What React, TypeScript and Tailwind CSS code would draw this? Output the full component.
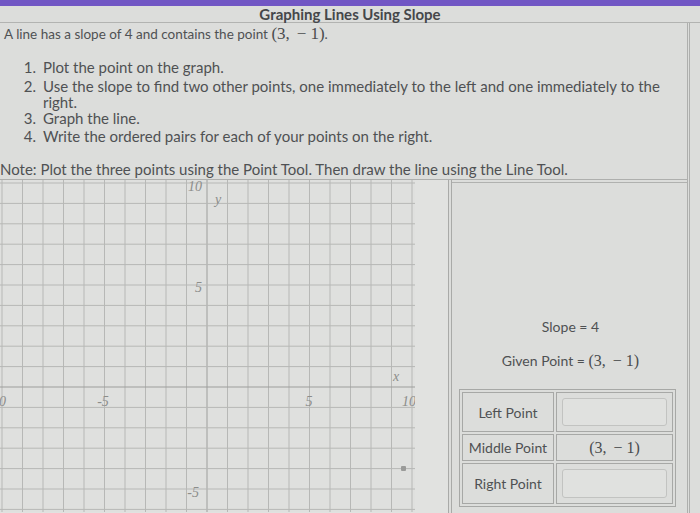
import React from "react";

const M = ({ size = "16px" }: { size?: string }) => (
  <span
    className={
      "font-['Liberation_Serif',serif] text-[#4a4c4e] " + (size === "17px" ? "text-[17px]" : "text-[16px]")
    }
  >
    (3,<span className="ml-[7px] mr-[4px]">−</span>1)
  </span>
);

function Graph() {
  const xs: number[] = [];
  for (let k = -10; k <= 10; k++) xs.push(207 + 20.5 * k);
  const ys: number[] = [];
  for (let k = 10; k >= -6; k--) ys.push(207 - 20.4 * k);
  const lbl = "font-['Liberation_Serif',serif]";
  return (
    <svg width="415" height="332" className="block">
      <rect x="0" y="0" width="415" height="332" fill="#dfe0de" />
      {xs.map((x, i) => (
        <line key={"v" + i} x1={x} y1={0} x2={x} y2={332} stroke={i === 10 ? "#9d9e9c" : "#b7b8b6"} strokeWidth="1" />
      ))}
      {ys.map((y, i) => (
        <line key={"h" + i} x1={0} y1={y} x2={415} y2={y} stroke={i === 10 ? "#9d9e9c" : "#b7b8b6"} strokeWidth="1" />
      ))}
      <g className={lbl} fill="#8c8d8b" fontStyle="italic" fontSize="14">
        <text x="202" y="11" textAnchor="end">10</text>
        <text x="215" y="24">y</text>
        <text x="202" y="112" textAnchor="end">5</text>
        <text x="199" y="317" textAnchor="end">-5</text>
        <text x="393" y="201">x</text>
        <text x="6" y="226" textAnchor="end">-10</text>
        <text x="103" y="226" textAnchor="middle">-5</text>
        <text x="309" y="226" textAnchor="middle">5</text>
        <text x="402" y="226">10</text>
      </g>
      <rect x="401" y="286" width="5" height="5" rx="1" fill="#9a9b99" />
    </svg>
  );
}

export default function App() {
  return (
    <div className="w-[700px] h-[513px] overflow-hidden bg-[#dcdddb] text-[#4f5153] font-['Lato',sans-serif] text-[14px] flex flex-col">
      <div className="h-[6px] shrink-0 bg-[#7156c4]" />
      <div className="h-[17px] shrink-0 border-b border-[#b2b3b1] text-center font-bold leading-[17px] text-[15px] text-[#45474a]">
        Graphing Lines Using Slope
      </div>
      <div className="flex-1 flex flex-col w-[690px] border-r-[3px] border-double border-[#aeafad] min-h-0">
        <div className="pl-[4px] pt-[1px] leading-[20px] text-[13.5px]">
          A line has a slope of 4 and contains the point <M size="17px" />.
        </div>
        <ol className="mt-[14px] text-[15px]">
          <li className="flex leading-[18px]">
            <span className="w-[36px] text-right shrink-0">1.</span>
            <span className="ml-[7px]">Plot the point on the graph.</span>
          </li>
          <li className="flex leading-[16px] mt-[2px]">
            <span className="w-[36px] text-right shrink-0">2.</span>
            <span className="ml-[7px] w-[625px]">
              Use the slope to find two other points, one immediately to the left and one immediately to the right.
            </span>
          </li>
          <li className="flex leading-[17px]">
            <span className="w-[36px] text-right shrink-0">3.</span>
            <span className="ml-[7px]">Graph the line.</span>
          </li>
          <li className="flex leading-[18px]">
            <span className="w-[36px] text-right shrink-0">4.</span>
            <span className="ml-[7px]">Write the ordered pairs for each of your points on the right.</span>
          </li>
        </ol>
        <div className="mt-[15px] leading-[18px] text-[15px]">
          Note: Plot the three points using the Point Tool. Then draw the line using the Line Tool.
        </div>
        <div className="mt-[1px] flex-1 flex border-t border-[#aeafad] min-h-0">
          <div className="w-[448px] shrink-0 bg-[#e1e2e0] overflow-hidden">
            <Graph />
          </div>
          <div className="flex-1 border-l-[4px] border-double border-[#a9aaa8] pt-[2px]">
            <div className="h-full border-t border-[#b0b1af] flex flex-col">
              <div className="mt-[134px] text-center leading-[20px] pl-[2px]">Slope = 4</div>
              <div className="mt-[14px] text-center leading-[20px] pl-[2px]">
                Given Point = <M />
              </div>
              <div className="mt-[18px] ml-[7px] w-[217px] border border-[#a7a8a6] p-[2px] grid grid-cols-[92px_1fr] gap-[2px]">
                <div className="h-[40px] border border-[#a7a8a6] flex items-center justify-center">Left Point</div>
                <div className="h-[40px] border border-[#a7a8a6] flex items-center justify-center p-[5px]">
                  <div className="w-full h-full border border-[#c2c3c1] rounded-[3px] bg-[#e0e1df]" />
                </div>
                <div className="h-[27px] border border-[#a7a8a6] flex items-center justify-center">Middle Point</div>
                <div className="h-[27px] border border-[#a7a8a6] flex items-center justify-center">
                  <M />
                </div>
                <div className="h-[41px] border border-[#a7a8a6] flex items-center justify-center">Right Point</div>
                <div className="h-[41px] border border-[#a7a8a6] flex items-center justify-center p-[5px]">
                  <div className="w-full h-full border border-[#c2c3c1] rounded-[3px] bg-[#e0e1df]" />
                </div>
              </div>
            </div>
          </div>
        </div>
      </div>
    </div>
  );
}
